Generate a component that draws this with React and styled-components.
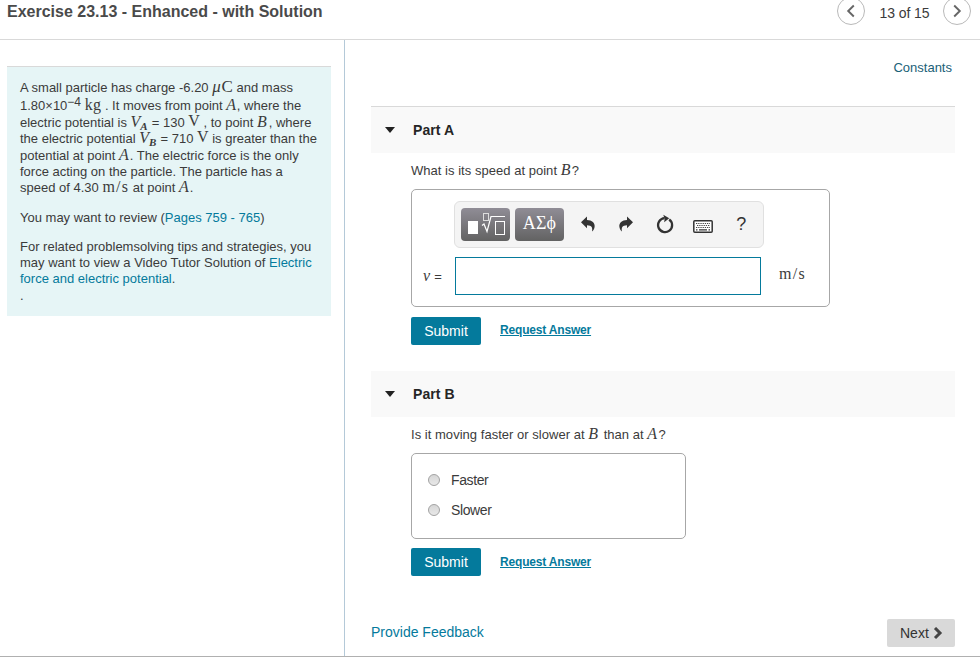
import React from 'react';
import styled, {createGlobalStyle} from 'styled-components';

const __TEAL = '#047a9c';
const __GRAY_BORDER = '#d9d9d9';
const __GRAY_BOX = '#a7a7a7';
const __TEXT = '#3b3b3b';

const GlobalStyle = createGlobalStyle`
  * {
    box-sizing: border-box;
  }
  body {
    margin: 0;
    background: #fff;
    color: ${__TEXT};
    font-family: 'Liberation Sans', Arial, sans-serif;
    font-size: 13px;
    overflow: hidden;
  }
`;

const Page = styled.div`
  display: flex;
  flex-direction: column;
  height: 657px;
  border-bottom: 1px solid #b0b0b0;
`;

const Header = styled.header`
  display: flex;
  justify-content: space-between;
  flex: none;
  height: 40px;
  padding: 0 9px 0 7px;
  border-bottom: 1px solid ${__GRAY_BORDER};
`;

const Title = styled.h1`
  margin: 0;
  font-size: 16px;
  line-height: 24px;
  color: #4a4a4a;
`;

const Pager = styled.nav`
  display: flex;
  margin-top: -3px;
`;

const PagerButton = styled.button`
  display: flex;
  align-items: center;
  justify-content: center;
  width: 28px;
  height: 28px;
  padding: 0;
  border: 1px solid #b9b9b9;
  border-radius: 50%;
  background: #fff;
`;

const PagerText = styled.span`
  width: 78px;
  padding-left: 1px;
  line-height: 32px;
  text-align: center;
  font-size: 14px;
  letter-spacing: -0.05px;
`;

const Columns = styled.div`
  display: flex;
  flex: 1;
  min-height: 0;
`;

const Sidebar = styled.aside`
  width: 345px;
  padding: 26px 0 0 7px;
  border-right: 1px solid #b4c9d8;
`;

const Problem = styled.section`
  width: 324px;
  height: 250px;
  padding: 13px 0 0 13px;
  border-top: 1px solid ${__GRAY_BORDER};
  background: #e6f5f6;
`;

const Paragraph = styled.div`
  margin-bottom: ${props => props.$gap || 0}px;
`;

const Line = styled.div`
  height: ${props => props.$height || 16}px;
  padding-top: ${props => (props.$height || 16) - 16}px;
  line-height: 16px;
  white-space: pre;
  letter-spacing: ${props => props.$track || 0}px;
`;

const Math = styled.span`
  font-family: 'Liberation Serif', 'Times New Roman', serif;
  font-size: ${props => props.$size || 16}px;
  font-style: ${props => (props.$upright ? 'normal' : 'italic')};
  line-height: 0;
  letter-spacing: ${props => props.$track || 0}px;
  vertical-align: ${props => props.$raise || 0}px;
`;

const Sub = styled.sub`
  font-size: 11px;
  font-weight: bold;
  line-height: 0;
  letter-spacing: 0.5px;
  vertical-align: -3px;
`;

const Sup = styled.sup`
  font-size: 12px;
  line-height: 0;
  vertical-align: 4px;
`;

const Link = styled.a`
  color: ${__TEAL};
`;

const Main = styled.main`
  flex: 1;
  padding: 0 25px 0 26px;
`;

const Constants = styled.div`
  height: 66px;
  padding: 19px 3px 0 0;
  line-height: 17px;
  text-align: right;
  color: #1a6178;
`;

const PartHeader = styled.div`
  display: flex;
  align-items: center;
  height: ${props => (props.$ruled ? 47 : 46)}px;
  padding-left: 14px;
  border-top: ${props => (props.$ruled ? `1px solid ${__GRAY_BORDER}` : 'none')};
  background: #f9f9f9;
`;

const Caret = styled.span`
  border: 5px solid transparent;
  border-top: 6px solid #222;
  border-bottom: none;
`;

const PartTitle = styled.h2`
  margin: 0 0 0 18px;
  font-size: 14px;
  letter-spacing: 0.1px;
  color: #252525;
`;

const PartBody = styled.div`
  padding-left: 40px;
`;

const Question = styled.div`
  height: 36px;
  padding-top: 10px;
  line-height: 16px;
  white-space: pre;
  letter-spacing: 0.03px;
`;

const AnswerBox = styled.div`
  width: 419px;
  height: 118px;
  padding: 11px 0 0 11px;
  border: 1px solid ${__GRAY_BOX};
  border-radius: 5px;
`;

const Toolbar = styled.div`
  display: flex;
  align-items: center;
  width: 310px;
  height: 47px;
  margin-left: 31px;
  padding-left: 6px;
  border: 1px solid #e0e0e0;
  border-radius: 6px;
  background: #f4f4f4;
`;

const DarkButton = styled.button`
  display: flex;
  align-items: center;
  justify-content: center;
  width: 49px;
  height: 33px;
  margin-right: 5px;
  padding: 0 0 2px;
  border: none;
  border-radius: 4px;
  background: linear-gradient(#908d96, #626262);
  color: #fff;
  font-family: 'Liberation Serif', serif;
  font-size: 18px;
  letter-spacing: 0.2px;
`;

const ToolButton = styled.button`
  display: flex;
  align-items: center;
  justify-content: center;
  width: 38.3px;
  height: 33px;
  padding: ${props => props.$drop || 0}px 0 ${props => props.$lift || 0}px;
  border: none;
  background: none;
  color: #333;
  font-family: 'Liberation Sans', Arial, sans-serif;
  font-size: 18px;
`;

const InputRow = styled.div`
  display: flex;
  align-items: center;
  margin-top: 9px;
`;

const Variable = styled.label`
  width: 32px;
`;

const AnswerInput = styled.input`
  width: 306px;
  height: 38px;
  border: 1px solid ${__TEAL};
  background: #fff;
  outline: none;
`;

const Unit = styled.span`
  margin: -3px 0 0 18px;
`;

const ChoiceBox = styled.div`
  display: flex;
  flex-direction: column;
  width: 275px;
  height: 86px;
  padding: 11px 0 0 16px;
  border: 1px solid ${__GRAY_BOX};
  border-radius: 5px;
`;

const Choice = styled.label`
  display: flex;
  align-items: center;
  height: 30px;
  font-size: 14px;
  letter-spacing: -0.4px;
`;

const Radio = styled.input`
  appearance: none;
  width: 12px;
  height: 12px;
  margin: 0 11px 0 0;
  border: 1px solid #a2a2a2;
  border-radius: 50%;
  background: linear-gradient(#d6d6d6, #e8e8e8);
`;

const Actions = styled.div`
  display: flex;
  align-items: center;
  height: 28px;
  margin-top: ${props => props.$top}px;
`;

const Submit = styled.button`
  width: 70px;
  height: 28px;
  padding: 0;
  border: none;
  border-radius: 2px;
  background: ${__TEAL};
  color: #fff;
  font-family: inherit;
  font-size: 14px;
`;

const RequestAnswer = styled.a`
  margin: ${props => props.$shift || 0}px 0 0 19px;
  color: ${__TEAL};
  font-size: 12px;
  font-weight: bold;
  letter-spacing: -0.18px;
  text-decoration: underline;
`;

const Footer = styled.footer`
  display: flex;
  align-items: center;
  justify-content: space-between;
  height: 28px;
  margin-top: 43px;
`;

const Feedback = styled.a`
  margin-top: -2px;
  color: ${__TEAL};
  font-size: 14px;
`;

const Next = styled.button`
  display: flex;
  align-items: center;
  width: 68px;
  height: 28px;
  padding: 0 0 0 13px;
  border: none;
  border-radius: 2px;
  background: #d9d9d9;
  color: #333;
  font-family: inherit;
  font-size: 14px;
`;

const Chevron = ({left}) => (
  <svg width="12" height="14" viewBox="0 0 12 14" fill="none">
    <path
      d={left ? 'M8.8 1.5L3.2 7L8.8 12.5' : 'M3.2 1.5L8.8 7L3.2 12.5'}
      stroke="#666"
      strokeWidth="1.9"
    />
  </svg>
);

const BoldChevron = () => (
  <svg width="10" height="13" viewBox="0 0 10 13" fill="none">
    <path d="M2 1L7 6L2 11" stroke="#444" strokeWidth="3" />
  </svg>
);

const TemplateIcon = () => (
  <svg width="40" height="26" viewBox="0 0 40 26" fill="none">
    <rect x="2" y="10" width="10" height="13" fill="#fff" />
    <rect x="17.5" y="2.5" width="5" height="7" stroke="#ddd" />
    <path d="M16 14.5L18 13L21 20.5L25 5.5H39" stroke="#fff" strokeWidth="1.2" />
    <rect x="29.5" y="10.5" width="9" height="13" stroke="#fff" />
  </svg>
);

const ArrowIcon = ({flip}) => (
  <svg width="16" height="16" viewBox="0 0 16 16">
    <path
      transform={flip ? 'translate(16 0) scale(-1 1)' : undefined}
      d="M1 6.3L7 0.5V4C12 4 15.2 7 14.6 11C14.2 13 13.3 14.8 12 15.6C12.8 12 12 9.2 7 9.2V12.2Z"
      fill="#333"
    />
  </svg>
);

const ResetIcon = () => (
  <svg width="18" height="20" viewBox="0 0 18 20">
    <path
      d="M13.2 5.5A7 7 0 1 1 8.5 4.2"
      fill="none"
      stroke="#333"
      strokeWidth="2.3"
    />
    <path d="M7.3 0.8L13.2 4.2L8.2 8.2L8.6 5Z" fill="#333" />
  </svg>
);

const KeyboardIcon = () => (
  <svg width="20" height="13" viewBox="0 0 20 13">
    <rect
      x="0.8"
      y="0.8"
      width="18.4"
      height="11.4"
      rx="1"
      fill="#fff"
      stroke="#333"
      strokeWidth="1.5"
    />
    <path d="M3 3.5H17M4 5.5H17M3 7.5H17" stroke="#444" strokeDasharray="1.3 0.9" />
    <path d="M3 9.8H4.5M6 9.8H14M15.5 9.8H17" stroke="#333" strokeWidth="1.2" />
  </svg>
);

const ProblemText = () => (
  <Problem>
    <Paragraph $gap={14}>
      <Line>
        A small particle has charge -6.20 <Math $size={17} $track={0.8}>μ<Math $upright $size={17}>C</Math></Math> and mass
      </Line>
      <Line $height={18}>
        1.80×10<Sup>−4</Sup> <Math $upright $size={16} $track={0.3}>kg</Math> . It moves from point <Math $track={0.8}>A</Math>, where the
      </Line>
      <Line $height={17}>
        electric potential is <Math>V<Sub>A</Sub></Math> = 130 <Math $upright $raise={1}>V</Math> , to point <Math $track={2}>B</Math>, where
      </Line>
      <Line>
        the electric potential <Math>V<Sub>B</Sub></Math> = 710 <Math $upright $raise={1}>V</Math> is greater than the
      </Line>
      <Line $height={17}>
        potential at point <Math $track={1}>A</Math>. The electric force is the only
      </Line>
      <Line>force acting on the particle. The particle has a</Line>
      <Line>
        speed of 4.30 <Math $upright $track={1.2}>m/s</Math> at point <Math $track={1}>A</Math>.
      </Line>
    </Paragraph>
    <Paragraph $gap={13}>
      <Line>
        You may want to review (<Link>Pages 759 - 765</Link>)
      </Line>
    </Paragraph>
    <Paragraph>
      <Line>For related problemsolving tips and strategies, you</Line>
      <Line>
        may want to view a Video Tutor Solution of <Link>Electric</Link>
      </Line>
      <Line>
        <Link>force and electric potential</Link>.
      </Line>
      <Line $height={17}>.</Line>
    </Paragraph>
  </Problem>
);

const PartA = () => (
  <section>
    <PartHeader $ruled>
      <Caret />
      <PartTitle>Part A</PartTitle>
    </PartHeader>
    <PartBody>
      <Question>
        What is its speed at point <Math $track={1.3}>B</Math>?
      </Question>
      <AnswerBox>
        <Toolbar>
          <DarkButton>
            <TemplateIcon />
          </DarkButton>
          <DarkButton>ΑΣϕ</DarkButton>
          <ToolButton $lift={2}>
            <ArrowIcon />
          </ToolButton>
          <ToolButton $lift={2}>
            <ArrowIcon flip />
          </ToolButton>
          <ToolButton $lift={1}>
            <ResetIcon />
          </ToolButton>
          <ToolButton $drop={4}>
            <KeyboardIcon />
          </ToolButton>
          <ToolButton>?</ToolButton>
        </Toolbar>
        <InputRow>
          <Variable>
            <Math $track={0.5}>v</Math> =
          </Variable>
          <AnswerInput />
          <Unit>
            <Math $upright $track={1.3}>
              m/s
            </Math>
          </Unit>
        </InputRow>
      </AnswerBox>
      <Actions $top={10}>
        <Submit>Submit</Submit>
        <RequestAnswer $shift={-3}>Request Answer</RequestAnswer>
      </Actions>
    </PartBody>
  </section>
);

const PartBSection = styled.section`
  margin-top: 26px;
`;

const PartB = () => (
  <PartBSection>
    <PartHeader>
      <Caret />
      <PartTitle>Part B</PartTitle>
    </PartHeader>
    <PartBody>
      <Question>
        Is it moving faster or slower at <Math $track={2}>B</Math> than at <Math $track={1.4}>A</Math>?
      </Question>
      <ChoiceBox>
        {['Faster', 'Slower'].map(choice => (
          <Choice key={choice}>
            <Radio type="radio" name="speed" />
            {choice}
          </Choice>
        ))}
      </ChoiceBox>
      <Actions $top={9}>
        <Submit>Submit</Submit>
        <RequestAnswer>Request Answer</RequestAnswer>
      </Actions>
    </PartBody>
  </PartBSection>
);

const App = () => (
  <Page>
    <GlobalStyle />
    <Header>
      <Title>Exercise 23.13 - Enhanced - with Solution</Title>
      <Pager>
        <PagerButton>
          <Chevron left />
        </PagerButton>
        <PagerText>13 of 15</PagerText>
        <PagerButton>
          <Chevron />
        </PagerButton>
      </Pager>
    </Header>
    <Columns>
      <Sidebar>
        <ProblemText />
      </Sidebar>
      <Main>
        <Constants>Constants</Constants>
        <PartA />
        <PartB />
        <Footer>
          <Feedback>Provide Feedback</Feedback>
          <Next>
            Next&nbsp;
            <BoldChevron />
          </Next>
        </Footer>
      </Main>
    </Columns>
  </Page>
);

export default App;
